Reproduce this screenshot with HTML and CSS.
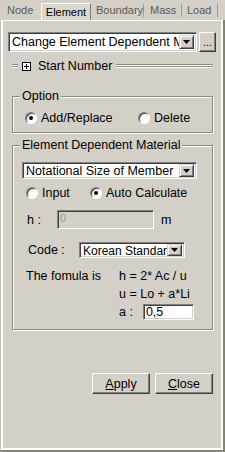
FILE: index.html
```html
<!DOCTYPE html>
<html lang="en">
<head>
  <meta charset="UTF-8">
  <meta name="viewport" content="width=device-width, initial-scale=1.0">
  <title>Element Dependent Material</title>
  <link rel="stylesheet" href="styles.css">
</head>
<body>
  <div class="window">
    <div class="tabs">
      <div class="tab node">Node</div>
      <div class="tab active">Element</div>
      <div class="tab sep boundary">Boundary</div>
      <div class="tab sep mass">Mass</div>
      <div class="tab sep load">Load</div>
    </div>

    <div class="panel">
      <div class="cmd-row">
        <div class="combo cmd-combo">
          <div class="combo-text">Change Element Dependent Material</div>
          <div class="drop"><svg width="7" height="4" viewBox="0 0 7 4"><path d="M0 0h7L3.5 4z" fill="#000"/></svg></div>
        </div>
        <button class="btn dots">...</button>
      </div>

      <div class="section-head">
        <div class="dbl-line short"></div>
        <div class="plus-box"><svg width="9" height="9" viewBox="0 0 9 9"><path d="M2 4.5h5M4.5 2v5" stroke="#000" stroke-width="1"/></svg></div>
        <span class="section-label">Start Number</span>
        <div class="dbl-line"></div>
      </div>

      <div class="group option-group">
        <div class="group-title">Option</div>
        <div class="radio-row">
          <label class="radio-item wide"><span class="radio checked"></span>Add/Replace</label>
          <label class="radio-item"><span class="radio"></span>Delete</label>
        </div>
      </div>

      <div class="group material-group">
        <div class="group-title">Element Dependent Material</div>
        <div class="combo size-combo">
          <div class="combo-text">Notational Size of Member</div>
          <div class="drop"><svg width="7" height="4" viewBox="0 0 7 4"><path d="M0 0h7L3.5 4z" fill="#000"/></svg></div>
        </div>
        <div class="radio-row calc-row">
          <label class="radio-item input-item"><span class="radio"></span>Input</label>
          <label class="radio-item"><span class="radio checked"></span>Auto Calculate</label>
        </div>
        <div class="field-row h-row">
          <span class="h-label">h :</span>
          <div class="textbox disabled">0</div>
          <span class="unit">m</span>
        </div>
        <div class="field-row code-row">
          <span class="code-label">Code :</span>
          <div class="combo code-combo">
            <div class="combo-text">Korean Standard</div>
            <div class="drop"><svg width="7" height="4" viewBox="0 0 7 4"><path d="M0 0h7L3.5 4z" fill="#000"/></svg></div>
          </div>
        </div>
        <div class="formula">
          <span>The fomula is</span>
          <span>h = 2* Ac / u</span>
          <span></span>
          <span>u = Lo + a*Li</span>
          <span></span>
          <span class="a-field">a :<span class="textbox a-box">0,5</span></span>
        </div>
      </div>

      <div class="actions">
        <button class="btn action"><u>A</u>pply</button>
        <button class="btn action"><u>C</u>lose</button>
      </div>
    </div>
  </div>
</body>
</html>
```

FILE: styles.css
```css
body {
  margin: 0;
  font-family: 'Liberation Sans', Arial, sans-serif;
  font-size: 12px;
  color: #000;
  background: #d4d0c8;
}
.window {
  width: 225px;
  height: 452px;
  display: flex;
  flex-direction: column;
  background: #d4d0c8;
}

/* tab strip */
.tabs {
  height: 20px;
  display: flex;
  align-items: flex-end;
  font-size: 11px;
}
.tab {
  box-sizing: border-box;
  height: 13px;
  line-height: 13px;
  margin-bottom: 3px;
  color: #5a5a5a;
  white-space: nowrap;
}
.tab.node {
  width: 41px;
  padding-left: 7px;
}
.tab.boundary {
  width: 53px;
  padding-left: 5px;
}
.tab.mass {
  width: 38px;
  padding-left: 6px;
}
.tab.load {
  width: 36px;
  padding-left: 5px;
}
.tab.sep {
  border-right: 1px solid #9c9c94;
}
.tab.active {
  height: 17px;
  line-height: 16px;
  margin-bottom: 0;
  width: 50px;
  text-align: center;
  color: #000;
  background: #dad7cf;
  border-left: 1px solid #fff;
  border-top: 1px solid #fff;
  border-right: 1px solid #808080;
}

.panel {
  flex: 1;
  border-left: 1px solid #c4c1b8;
  border-right: 2px solid #86866e;
  border-bottom: 2px solid #86866e;
  box-shadow: inset 2px 1px 0 #fff, inset -2px -2px 0 #fff;
  display: flex;
  flex-direction: column;
}

/* sunken combo */
.combo {
  display: flex;
  box-sizing: border-box;
  background: #fff;
  border: 1px solid;
  border-color: #808080 #fff #fff #808080;
  box-shadow: inset 1px 1px 0 #404040, inset -1px -1px 0 #d4d0c8;
  padding: 2px;
}
.combo-text {
  flex: 1;
  overflow: hidden;
  white-space: nowrap;
  padding-left: 1px;
  line-height: 14px;
}
.drop {
  width: 15px;
  box-sizing: border-box;
  background: #d4d0c8;
  border: 1px solid;
  border-color: #d4d0c8 #404040 #404040 #d4d0c8;
  box-shadow: inset 1px 1px 0 #fff, inset -1px -1px 0 #808080;
  display: flex;
  align-items: center;
  justify-content: center;
}

.btn {
  font-family: inherit;
  font-size: 12px;
  color: #000;
  background: #d4d0c8;
  border: 1px solid;
  border-color: #fff #404040 #404040 #fff;
  box-shadow: inset -1px -1px 0 #808080;
  padding: 0;
}

.cmd-row {
  display: flex;
  margin: 12px 0 0 7px;
  height: 20px;
}
.cmd-combo {
  width: 189px;
  font-size: 12.5px;
}
.cmd-combo .combo-text {
  line-height: 15px;
}
.dots {
  width: 17px;
  margin-left: 2px;
  font-size: 11px;
}

.section-head {
  display: flex;
  align-items: center;
  height: 12px;
  margin: 8px 10px 0 11px;
}
.dbl-line {
  flex: 1;
  height: 4px;
  margin-left: 4px;
  background: linear-gradient(#8a8a76 0 1px, #fff 1px 2px, #8a8a76 2px 3px, #fff 3px 4px);
}
.dbl-line.short {
  flex: none;
  width: 6px;
  margin-left: 0;
}
.plus-box {
  width: 9px;
  height: 9px;
  box-sizing: border-box;
  border: 1px solid #000;
  background: #fff;
  margin-left: 4px;
  display: flex;
}
.plus-box svg {
  margin: -1px;
}
.section-label {
  margin-left: 7px;
  font-size: 12.5px;
}

/* etched group box */
.group {
  position: relative;
  box-sizing: border-box;
  margin: 0 10px 0 11px;
  border: 1px solid #8a8a76;
  box-shadow: inset 1px 1px 0 #fff, 1px 1px 0 #fff;
  padding-left: 12px;
}
.group-title {
  position: absolute;
  top: -8px;
  left: 7px;
  padding: 0 2px;
  line-height: 15px;
  background: #d4d0c8;
  font-size: 12.5px;
}
.option-group {
  margin-top: 24px;
  height: 37px;
  padding-top: 14px;
}
.material-group {
  margin-top: 12px;
  height: 185px;
  padding-left: 9px;
}

.radio-row {
  display: flex;
  height: 13px;
  align-items: center;
  font-size: 12.5px;
}
.radio-item {
  display: flex;
  align-items: center;
}
.radio-item.wide {
  width: 113px;
}
.radio {
  width: 12px;
  height: 12px;
  box-sizing: border-box;
  border-radius: 50%;
  background: #fff;
  border: 1px solid;
  border-color: #808080 #fff #fff #808080;
  box-shadow: inset 1px 1px 0 #404040;
  margin-right: 4px;
  display: flex;
  align-items: center;
  justify-content: center;
}
.radio.checked::after {
  content: '';
  width: 4px;
  height: 4px;
  border-radius: 50%;
  background: #000;
}

.size-combo {
  margin-top: 16px;
  width: 175px;
  height: 17px;
  padding: 1px 2px;
  font-size: 12.5px;
}
.calc-row {
  margin-top: 7px;
  padding-left: 4px;
}
.input-item {
  width: 64px;
}

.field-row {
  display: flex;
  align-items: center;
  font-size: 12.5px;
}
.h-row {
  margin-top: 11px;
  height: 19px;
}
.h-label {
  width: 30px;
  padding-left: 5px;
}
.textbox {
  box-sizing: border-box;
  background: #fff;
  border: 1px solid;
  border-color: #808080 #fff #fff #808080;
  box-shadow: inset 1px 1px 0 #404040, inset -1px -1px 0 #d4d0c8;
  padding: 0 2px;
}
.textbox.disabled {
  width: 97px;
  height: 19px;
  line-height: 15px;
  color: #9a9a9a;
  background: #d4d0c8;
  font-size: 11px;
}
.unit {
  margin-left: 7px;
}
.code-row {
  margin-top: 13px;
  height: 16px;
}
.code-label {
  width: 51px;
  padding-left: 6px;
}
.code-combo {
  width: 106px;
  height: 16px;
  padding: 1px 2px;
  font-size: 12px;
}

.formula {
  display: grid;
  grid-template-columns: 93px auto;
  grid-auto-rows: 18px;
  align-items: center;
  margin-top: 9px;
  padding-left: 4px;
  font-size: 12.5px;
}
.a-field {
  display: flex;
  align-items: center;
}
.a-box {
  width: 51px;
  height: 16px;
  line-height: 14px;
  margin-left: 10px;
}

.actions {
  display: flex;
  justify-content: flex-end;
  gap: 5px;
  margin: 43px 10px 0 0;
}
.action {
  width: 58px;
  height: 21px;
  font-size: 12.5px;
}
```
